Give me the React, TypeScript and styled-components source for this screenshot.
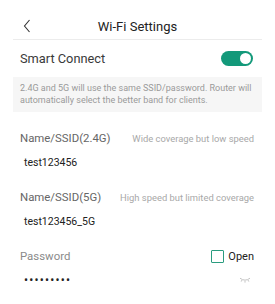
import styled, { createGlobalStyle } from 'styled-components';

const GlobalStyle = createGlobalStyle`
  body {
    margin: 0;
    background: #ffffff;
    font-family: Roboto, "Noto Sans", "Liberation Sans", sans-serif;
  }
`;

const fields = [
  { id: 'ssid24', label: 'Name/SSID(2.4G)', hint: 'Wide coverage but low speed', value: 'test123456' },
  { id: 'ssid5', label: 'Name/SSID(5G)', hint: 'High speed but limited coverage', value: 'test123456_5G' },
];

export default function App() {
  return (
    <Page>
      <GlobalStyle />
      <Header>
        <BackButton>
          <svg width="8" height="14" viewBox="0 0 8 14">
            <path d="M6.5 1 L1.5 7 L6.5 13" fill="none" stroke="#333" strokeWidth="1.1" />
          </svg>
        </BackButton>
        <Title>Wi-Fi Settings</Title>
      </Header>

      <SmartRow>
        <SmartLabel>Smart Connect</SmartLabel>
        <Toggle>
          <Knob />
        </Toggle>
      </SmartRow>
      <Note>
        2.4G and 5G will use the same SSID/password. Router will automatically select the better
        band for clients.
      </Note>

      <Fields>
        {fields.map((field) => (
          <Field key={field.id}>
            <LabelRow>
              <Label>{field.label}</Label>
              <Hint>{field.hint}</Hint>
            </LabelRow>
            <Value>{field.value}</Value>
          </Field>
        ))}
        <Field>
          <LabelRow>
            <Label $light>Password</Label>
            <OpenOption>
              <CheckBox />
              <OpenText>Open</OpenText>
            </OpenOption>
          </LabelRow>
          <ValueRow>
            <Dots>•••••••••</Dots>
            <svg width="12" height="6" viewBox="0 0 12 6">
              <path
                d="M1 1.2 Q6 5 11 1.2 M3 3 L2.2 4.6 M6 3.8 L6 5.6 M9 3 L9.8 4.6"
                fill="none"
                stroke="#b5b5b5"
                strokeWidth="0.8"
              />
            </svg>
          </ValueRow>
        </Field>
      </Fields>
    </Page>
  );
}

const Page = styled.div`
  width: 275px;
  height: 304px;
  overflow: hidden;
  background: #ffffff;
`;

const Header = styled.div`
  position: relative;
  display: flex;
  align-items: center;
  justify-content: center;
  height: 40px;
  padding-top: 14px;
  margin: 0 13px;
  border-bottom: 1px solid #ececec;
  box-sizing: border-box;
`;

const BackButton = styled.div`
  position: absolute;
  left: 10px;
  top: 19px;
  display: flex;
`;

const Title = styled.div`
  font-size: 13px;
  color: #222222;
`;

const SmartRow = styled.div`
  display: flex;
  align-items: center;
  justify-content: space-between;
  height: 37px;
  padding: 0 22px 0 20px;
`;

const SmartLabel = styled.div`
  font-size: 12.8px;
  color: #3a3a3a;
`;

const Toggle = styled.div`
  display: flex;
  justify-content: flex-end;
  align-items: center;
  width: 32px;
  height: 15px;
  padding: 0 2px;
  box-sizing: border-box;
  border-radius: 8px;
  background: #13997a;
`;

const Knob = styled.div`
  width: 11px;
  height: 11px;
  border-radius: 50%;
  background: #ffffff;
`;

const Note = styled.div`
  margin: 0 13px;
  padding: 5px 2px 6px 7px;
  background: #f6f6f6;
  font-size: 9px;
  line-height: 12px;
  color: #9a9a9a;
`;

const Fields = styled.div`
  display: flex;
  flex-direction: column;
  padding: 14px 21px 0 20px;
`;

const Field = styled.div`
  display: flex;
  flex-direction: column;
  height: 59px;
`;

const LabelRow = styled.div`
  display: flex;
  align-items: center;
  justify-content: space-between;
  height: 24px;
`;

const Label = styled.div<{ $light?: boolean }>`
  font-size: 11.4px;
  color: ${(p) => (p.$light ? '#8a8a8a' : '#666666')};
`;

const Hint = styled.div`
  font-size: 9.4px;
  color: #a8a8a8;
`;

const Value = styled.div`
  display: flex;
  align-items: center;
  height: 24px;
  padding-left: 4px;
  font-size: 10.5px;
  color: #222222;
`;

const ValueRow = styled(Value)`
  justify-content: space-between;
  padding-right: 3px;
`;

const Dots = styled.span`
  font-size: 12px;
  letter-spacing: 1.2px;
`;

const OpenOption = styled.div`
  display: flex;
  align-items: center;
  gap: 4px;
`;

const CheckBox = styled.div`
  width: 11px;
  height: 11px;
  border: 1px solid #2a9c7f;
  border-radius: 1px;
`;

const OpenText = styled.span`
  font-size: 11px;
  color: #222222;
`;
